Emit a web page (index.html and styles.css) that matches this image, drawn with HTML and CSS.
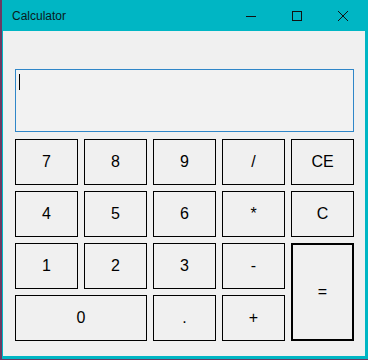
FILE: index.html
```html
<!DOCTYPE html>
<html lang="en">
<head>
    <meta charset="UTF-8">
    <title>Calculator</title>
    <link rel="stylesheet" href="styles.css">
</head>
<body>
    <div class="window">
        <div class="titlebar">
            <span class="title">Calculator</span>
            <span class="caption-btn">
                <svg width="12" height="12" viewBox="0 0 12 12"><path d="M1 6.5h10" stroke="#111" stroke-width="1"/></svg>
            </span>
            <span class="caption-btn">
                <svg width="12" height="12" viewBox="0 0 12 12"><rect x="1.5" y="1.5" width="9" height="9" fill="none" stroke="#111" stroke-width="1"/></svg>
            </span>
            <span class="caption-btn">
                <svg width="12" height="12" viewBox="0 0 12 12"><path d="M1 1L11 11M11 1L1 11" stroke="#111" stroke-width="1"/></svg>
            </span>
        </div>

        <div class="client">
            <div class="display"><span class="caret"></span></div>

            <div class="keys">
                <button>7</button>
                <button>8</button>
                <button>9</button>
                <button>/</button>
                <button>CE</button>
                <button>4</button>
                <button>5</button>
                <button>6</button>
                <button>*</button>
                <button>C</button>
                <button>1</button>
                <button>2</button>
                <button>3</button>
                <button>-</button>
                <button class="equals">=</button>
                <button class="zero">0</button>
                <button>.</button>
                <button>+</button>
            </div>
        </div>
    </div>
</body>
</html>
```

FILE: styles.css
```css
body {
    margin: 0;
    background: #6b3a63;
    font-family: "Liberation Sans", Arial, sans-serif;
}
.window {
    width: 366px;
    margin-left: 2px;
}
.titlebar {
    display: flex;
    align-items: center;
    height: 31px;
    padding-right: 2px;
    background: #00b6c4;
}
.title {
    flex: 1;
    padding-left: 10px;
    font-size: 12px;
    color: #0a1a1c;
}
.caption-btn {
    width: 46px;
    display: flex;
    justify-content: center;
}
.caption-btn svg {
    display: block;
}
.client {
    background: #f0f0f0;
    border-left: 1px solid #00b6c4;
    border-right: 3px solid #00b6c4;
    border-bottom: 3px solid #00b6c4;
    padding: 38px 0 15px 12px;
}
.display {
    width: 337px;
    height: 61px;
    border: 1px solid #2f86c8;
    background: #f2f2f2;
    margin-bottom: 7px;
}
.caret {
    display: block;
    width: 1px;
    height: 16px;
    margin: 4px 0 0 3px;
    background: #000;
}
.keys {
    display: grid;
    grid-template-columns: repeat(5, 63px);
    grid-auto-rows: 46px;
    gap: 6px;
}
.keys button {
    margin: 0;
    padding: 0;
    border: 1px solid #000;
    background: #f0f0f0;
    font-family: "Liberation Sans", Arial, sans-serif;
    font-size: 16px;
    color: #000;
}
.keys .equals {
    grid-column: 5;
    grid-row: 3 / span 2;
    border-width: 2px;
}
.keys .zero {
    grid-column: span 2;
}
```
